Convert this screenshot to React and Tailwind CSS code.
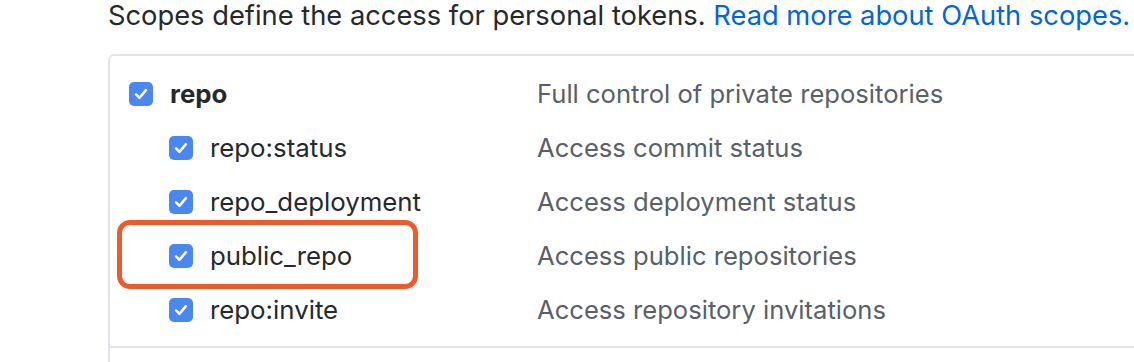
import React from "react";

const scopes = [
  { name: "repo", desc: "Full control of private repositories", top: true },
  { name: "repo:status", desc: "Access commit status" },
  { name: "repo_deployment", desc: "Access deployment status" },
  { name: "public_repo", desc: "Access public repositories" },
  { name: "repo:invite", desc: "Access repository invitations" },
];

const CheckBox = () => (
  <span className="flex h-[24px] w-[24px] shrink-0 items-center justify-center rounded-[5px] bg-[#4a87ee]">
    <svg width="18" height="18" viewBox="0 0 16 16" fill="none">
      <path
        d="M3.6 8.4 L6.6 11.4 L12.4 4.6"
        stroke="white"
        strokeWidth="2.2"
        strokeLinecap="round"
        strokeLinejoin="round"
      />
    </svg>
  </span>
);

const App = () => {
  return (
    <div
      className="relative h-[362px] w-[1134px] overflow-hidden bg-white pl-[108px]"
      style={{ fontFamily: "Inter, 'Noto Sans', sans-serif" }}
    >
      <p className="whitespace-nowrap text-[27.3px] leading-[32px] text-[#24292e]">
        Scopes define the access for personal tokens.{" "}
        <a className="text-[#0366d6]">Read more about OAuth scopes.</a>
      </p>

      <div className="mt-[22px] w-[1200px] rounded-tl-[6px] border-l-2 border-t-2 border-[#e1e4e8]">
        <div className="pb-[9px] pl-[19px] pt-[11px]">
          {scopes.map((s) => (
            <div key={s.name} className="flex h-[54px] items-center">
              <div
                className={
                  "flex w-[408px] items-center " + (s.top ? "" : "pl-[40px]")
                }
              >
                <CheckBox />
                <span
                  className={
                    "ml-[17px] text-[25.8px] leading-[30px] text-[#24292e] " +
                    (s.top ? "font-bold" : "")
                  }
                >
                  {s.name}
                </span>
              </div>
              <span className="text-[25.6px] leading-[30px] text-[#586069]">
                {s.desc}
              </span>
            </div>
          ))}
        </div>
        <div className="h-[20px] border-t-2 border-[#e1e4e8]" />
      </div>

      <div className="pointer-events-none absolute left-[117px] top-[220px] h-[69px] w-[301px] rounded-[13px] border-[5px] border-[#ee5a2c]" />
    </div>
  );
};

export default App;
